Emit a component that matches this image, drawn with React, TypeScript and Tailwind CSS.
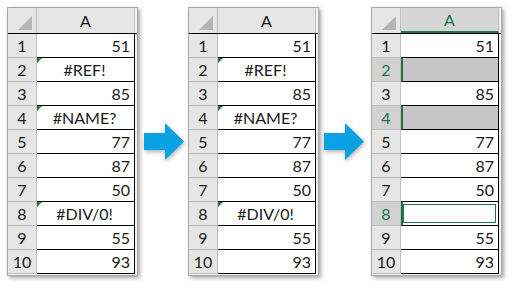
import React from "react";

type CellKind = "num" | "err" | "sel" | "active";

interface Row {
  n: number;
  v: string;
  kind: CellKind;
}

const before: Row[] = [
  { n: 1, v: "51", kind: "num" },
  { n: 2, v: "#REF!", kind: "err" },
  { n: 3, v: "85", kind: "num" },
  { n: 4, v: "#NAME?", kind: "err" },
  { n: 5, v: "77", kind: "num" },
  { n: 6, v: "87", kind: "num" },
  { n: 7, v: "50", kind: "num" },
  { n: 8, v: "#DIV/0!", kind: "err" },
  { n: 9, v: "55", kind: "num" },
  { n: 10, v: "93", kind: "num" },
];

const after: Row[] = [
  { n: 1, v: "51", kind: "num" },
  { n: 2, v: "", kind: "sel" },
  { n: 3, v: "85", kind: "num" },
  { n: 4, v: "", kind: "sel" },
  { n: 5, v: "77", kind: "num" },
  { n: 6, v: "87", kind: "num" },
  { n: 7, v: "50", kind: "num" },
  { n: 8, v: "", kind: "active" },
  { n: 9, v: "55", kind: "num" },
  { n: 10, v: "93", kind: "num" },
];

function Cell({ row }: { row: Row }) {
  if (row.kind === "sel") {
    return (
      <div className="w-[98px] h-full border-b border-r border-black bg-[#c6c6c6] border-l-2 border-l-[#217346]" />
    );
  }
  if (row.kind === "active") {
    return (
      <div className="w-[98px] h-full border-b border-r border-black bg-white border-l-2 border-l-[#217346] p-[2px] pl-0">
        <div className="w-full h-full border border-[#217346]" />
      </div>
    );
  }
  return (
    <div
      className={
        "relative w-[98px] h-full border-b border-r border-black bg-white flex items-center pt-[1px] " +
        (row.kind === "err" ? "justify-center pr-[2px]" : "justify-end pr-[4px]")
      }
    >
      {row.kind === "err" && (
        <span className="absolute left-0 top-0 w-0 h-0 border-t-[5px] border-t-[#1e7b3c] border-r-[5px] border-r-transparent" />
      )}
      {row.v}
    </div>
  );
}

function Sheet({ rows, result }: { rows: Row[]; result?: boolean }) {
  return (
    <div className="w-[131px] h-[269px] border border-[#a8a8a8] bg-[#f4f4f4] shadow-[2px_2px_4px_rgba(0,0,0,0.35)] flex flex-col text-[16px] text-[#1a1a1a] leading-none">
      {/* header row */}
      <div className="flex h-[26px] border-b border-black">
        <div className="relative w-[29px] h-full bg-[#e6e6e6] border-r border-[#bdbdbd]">
          <span className="absolute right-[4px] bottom-[3px] w-0 h-0 border-b-[14px] border-b-[#b5b5b5] border-l-[14px] border-l-transparent" />
        </div>
        <div
          className={
            "w-[98px] h-full flex items-center justify-center pt-[1px] border-r border-[#bdbdbd] " +
            (result
              ? "bg-[#d6d6d6] text-[#217346] border-b-2 border-b-[#217346]"
              : "bg-[#e6e6e6]")
          }
        >
          A
        </div>
      </div>
      {rows.map((row) => {
        const hl = result && row.kind !== "num";
        return (
          <div key={row.n} className="flex h-[24px]">
            <div
              className={
                "w-[29px] h-full flex items-center justify-center pt-[1px] border-b border-r border-[#bdbdbd] " +
                (hl ? "bg-[#d2d2d2] text-[#217346]" : "bg-[#e6e6e6] text-[#1a1a1a]")
              }
            >
              {row.n}
            </div>
            <Cell row={row} />
          </div>
        );
      })}
    </div>
  );
}

function Arrow() {
  return (
    <svg width="40" height="37" viewBox="0 0 40 37" className="drop-shadow-[1px_2px_2px_rgba(0,0,0,0.3)]">
      <polygon points="0,10 21,10 21,0 40,18.5 21,37 21,27 0,27" fill="#0ba1e2" />
    </svg>
  );
}

export default function App() {
  return (
    <div
      className="w-[518px] h-[291px] bg-white flex items-start pl-[7px] pt-[7px]"
      style={{ fontFamily: "Lato, 'Liberation Sans', sans-serif" }}
    >
      <Sheet rows={before} />
      <div className="self-stretch flex items-center ml-[6px] mr-[4px] pb-[16px]">
        <Arrow />
      </div>
      <Sheet rows={before} />
      <div className="self-stretch flex items-center ml-[5px] mr-[7px] pb-[16px]">
        <Arrow />
      </div>
      <Sheet rows={after} result />
    </div>
  );
}
